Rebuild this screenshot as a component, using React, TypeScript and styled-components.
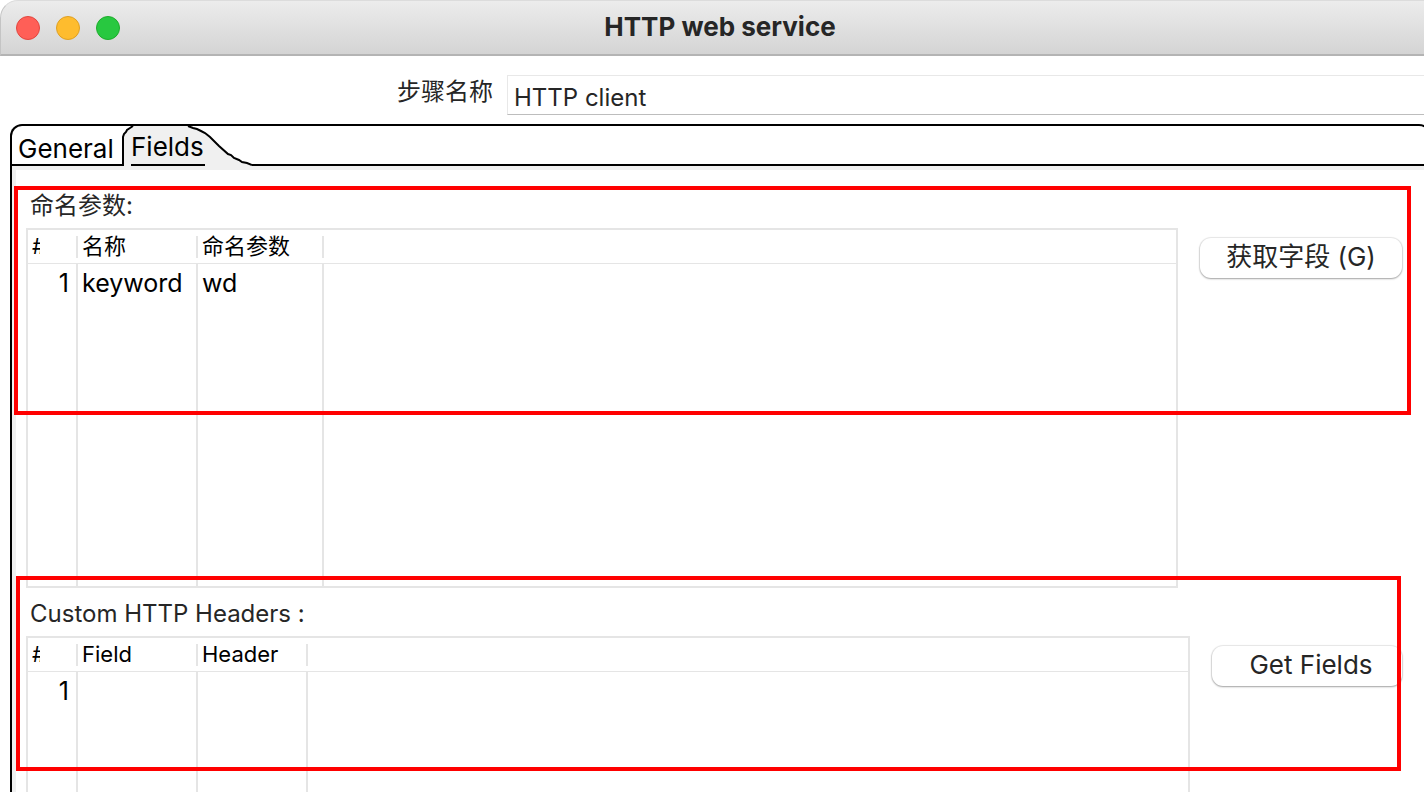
import React, { useState } from 'react';
import styled, { createGlobalStyle } from 'styled-components';

const Global = createGlobalStyle`
  * { box-sizing: border-box; }
  body {
    margin: 0;
    background: #fff;
    color: #000;
    font-family: Inter, "Noto Sans CJK SC", sans-serif;
  }
  button, input { font: inherit; color: inherit; }
`;

const Window = styled.div`
  display: flex;
  flex-direction: column;
  min-height: 100vh;
  overflow-x: clip;
`;

const TitleBar = styled.header`
  display: grid;
  grid-template-columns: 1fr auto 1fr;
  align-items: start;
  height: 56px;
  padding: 15px 0 0 15px;
  border-top: 1px solid #dcdcdc;
  border-left: 1px solid #c4c4c4;
  border-bottom: 2px solid #b4b4b4;
  border-top-left-radius: 18px;
  background: linear-gradient(#ececec, #d4d4d4);
`;

const Lights = styled.div`
  display: flex;
  gap: 16px;
`;

const Light = styled.button<{ $fill: string; $edge: string }>`
  width: 24px;
  height: 24px;
  padding: 0;
  border: 1px solid ${(p) => p.$edge};
  border-radius: 50%;
  background: ${(p) => p.$fill};
`;

const Title = styled.h1`
  margin: 0;
  font-size: 26px;
  line-height: 22px;
  font-weight: 700;
  color: #262626;
`;

const StepRow = styled.div`
  display: flex;
  align-items: flex-start;
  padding-top: 19px;
  margin-bottom: 9px;
  font-size: 24px;
  color: #262626;
`;

const StepLabel = styled.label`
  width: 493px;
  margin-right: 14px;
  line-height: 34px;
  text-align: right;
`;

const StepInput = styled.input`
  flex: 1;
  min-width: 0;
  height: 40px;
  padding: 5px 6px 0;
  border: 1px solid #e8e8e8;
  border-right: 0;
  border-bottom-color: #bdbdbd;
  border-radius: 0;
  background: #fff;
  outline: none;
`;

const Folder = styled.section`
  display: flex;
  flex: 1;
  flex-direction: column;
  margin-left: 10px;
  margin-right: -7px;
`;

const TabStrip = styled.div`
  display: flex;
  height: 42px;
  border: 2px solid #000;
  border-bottom: 0;
  border-radius: 12px 12px 0 0;
`;

const Tab = styled.button`
  padding: 0;
  border: 0;
  background: none;
  font-size: 26px;
  line-height: 38px;
  text-align: left;
`;

const PlainTab = styled(Tab)`
  width: 110px;
  padding: 4px 0 0 6px;
  border-bottom: 2px solid #000;
`;

const CurvedTab = styled(Tab)`
  position: relative;
  width: 130px;
  padding-left: 9px;
`;

const TabShape = styled.svg`
  position: absolute;
  top: 0;
  left: 0;
`;

const TabLabel = styled.span`
  position: relative;
  display: block;
  width: 74px;
  height: 40px;
  padding-top: 2px;
  border-bottom: 2px solid #000;
  white-space: nowrap;
`;

const StripRest = styled.div`
  flex: 1;
  border-bottom: 2px solid #000;
`;

const Panel = styled.div`
  display: flex;
  flex: 1;
  flex-direction: column;
  border: solid #000;
  border-width: 0 2px;
`;

const PanelBody = styled.div`
  display: flex;
  flex: 1;
  flex-direction: column;
  border: 4px solid #f0f0f0;
  border-bottom: 0;
`;

const Group = styled.section<{ $grow?: boolean }>`
  position: relative;
  display: flex;
  flex-direction: column;
  flex: ${(p) => (p.$grow ? '1' : 'none')};
  padding: ${(p) => (p.$grow ? '10px' : '20px')} 23px 0 10px;
`;

const Caption = styled.h2`
  margin: 0 0 6px 4px;
  font-size: 24px;
  line-height: 32px;
  font-weight: 400;
  color: #262626;
`;

const GroupRow = styled.div`
  display: flex;
  flex: 1;
  align-items: stretch;
  gap: 22px;
`;

const Grid = styled.div<{ $open?: boolean }>`
  flex: 1;
  display: flex;
  min-height: ${(p) => (p.$open ? '156px' : '360px')};
  border: 2px solid #e5e5e5;
  border-bottom-width: ${(p) => (p.$open ? '0' : '2px')};
`;

const Table = styled.table`
  width: 100%;
  table-layout: fixed;
  border-spacing: 0;
`;

const Head = styled.th`
  height: 34px;
  padding: 0;
  border-bottom: 1px solid #e5e5e5;
  font-size: 22px;
  line-height: 20px;
  font-weight: 400;
  text-align: left;
`;

const HeadText = styled.div`
  height: 22px;
  padding-left: 4px;
  border-right: 2px solid #e5e5e5;
  white-space: nowrap;
`;

const Mark = styled.span`
  display: block;
  width: 8px;
  overflow: hidden;
`;

const Cell = styled.td`
  padding: 4px 7px 0 4px;
  border-right: 2px solid #e5e5e5;
  font-size: 25px;
  line-height: 30px;
  vertical-align: top;
  &:first-child { text-align: right; }
  &:last-child { border-right: 0; }
`;

const PushButton = styled.button<{ $width: number }>`
  width: ${(p) => p.$width}px;
  height: 40px;
  margin-top: 10px;
  padding: 0 0 2px;
  padding-left: ${(p) => (p.$width < 200 ? '8px' : '0')};
  border: 0;
  border-radius: 11px;
  background: #fff;
  box-shadow: 0 0 1px 1px rgba(0, 0, 0, 0.09), 0 1px 2px rgba(0, 0, 0, 0.3);
  font-size: 26px;
  line-height: 36px;
  color: #262626;
  white-space: nowrap;
`;

const Highlight = styled.div<{ $box: string }>`
  position: absolute;
  inset: ${(p) => p.$box};
  border: 4px solid #f00;
  pointer-events: none;
`;

type GridProps = { heads: string[]; widths: number[]; row: string[]; open?: boolean };

function FieldGrid({ heads, widths, row, open }: GridProps) {
  return (
    <Grid $open={open}>
      <Table>
        <colgroup>
          {widths.map((w, i) => (
            <col key={i} width={w} />
          ))}
          <col />
        </colgroup>
        <thead>
          <tr>
            {heads.map((h, i) => (
              <Head key={h} scope="col">
                <HeadText>{i === 0 ? <Mark>{h}</Mark> : h}</HeadText>
              </Head>
            ))}
            <Head as="td" />
          </tr>
        </thead>
        <tbody>
          <tr>
            {row.map((c, i) => (
              <Cell key={i}>{c}</Cell>
            ))}
            <Cell />
          </tr>
        </tbody>
      </Table>
    </Grid>
  );
}

export default function App() {
  const [step, setStep] = useState('HTTP client');
  return (
    <Window>
      <Global />
      <TitleBar>
        <Lights>
          <Light aria-label="Close" $fill="#ff5f57" $edge="#e2463f" />
          <Light aria-label="Minimize" $fill="#febc2e" $edge="#dfa023" />
          <Light aria-label="Zoom" $fill="#28c840" $edge="#1dad2b" />
        </Lights>
        <Title>HTTP web service</Title>
      </TitleBar>
      <StepRow>
        <StepLabel htmlFor="step">步骤名称</StepLabel>
        <StepInput id="step" value={step} onChange={(e) => setStep(e.target.value)} />
      </StepRow>
      <Folder>
        <TabStrip role="tablist">
          <PlainTab role="tab" aria-selected="false">General</PlainTab>
          <CurvedTab role="tab" aria-selected="true">
            <TabShape width="130" height="40" viewBox="0 0 130 40" aria-hidden="true">
              <path d="M1 40V11L3 6L7 3L11 0H66L75 3L83 7L88 11L108 29L116 34L130 39V40Z" fill="#f0f0f0" />
              <path
                d="M1 40V11L2 8L4 6L5 4L8 2L11 0M66 0L71 2L75 3L79 5L83 7L88 11L97 20L106 28L109 29L112 32L117 34L120 36L125 37L130 39"
                fill="none"
                stroke="#000"
                strokeWidth="2"
              />
            </TabShape>
            <TabLabel>Fields</TabLabel>
          </CurvedTab>
          <StripRest />
        </TabStrip>
        <Panel role="tabpanel">
          <PanelBody>
            <Group>
              <Caption>命名参数:</Caption>
              <GroupRow>
                <FieldGrid heads={['#', '名称', '命名参数']} widths={[50, 120, 126]} row={['1', 'keyword', 'wd']} />
                <PushButton $width={202}>获取字段 (G)</PushButton>
              </GroupRow>
              <Highlight $box="16px 14px 173px -2px" />
            </Group>
            <Group $grow>
              <Caption>Custom HTTP Headers :</Caption>
              <GroupRow>
                <FieldGrid open heads={['#', 'Field', 'Header']} widths={[50, 120, 110]} row={['1', '', '']} />
                <PushButton $width={190}>Get Fields</PushButton>
              </GroupRow>
              <Highlight $box="-12px 24px 21px 0" />
            </Group>
          </PanelBody>
        </Panel>
      </Folder>
    </Window>
  );
}
